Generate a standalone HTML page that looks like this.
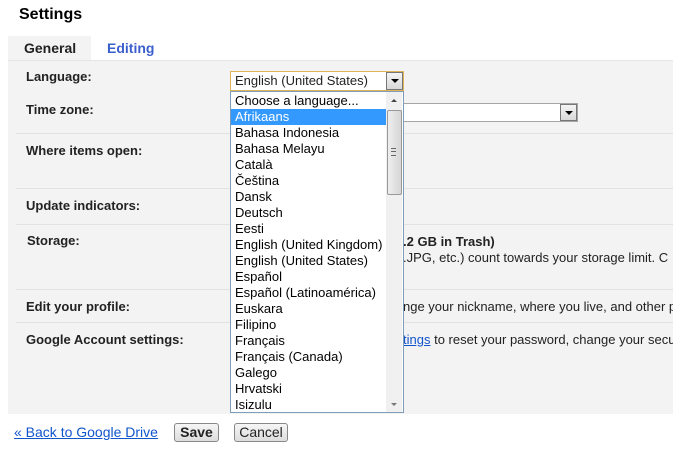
<!DOCTYPE html>
<html><head><style>
body{margin:0;width:673px;height:452px;background:#fff;font-family:"Liberation Sans",Arial,sans-serif;font-size:13px;color:#222;position:relative;overflow:hidden}
.a{position:absolute;white-space:nowrap}
.b{font-weight:bold}
.sep{position:absolute;left:16px;right:0;height:1px;background:#e2e2e2}
.btn{position:absolute;border:1px solid #888;border-radius:3px;background:linear-gradient(#f6f6f6,#ddd);font-size:14px;text-align:center;line-height:17px}
.list div{height:16px;line-height:16px;padding-left:4px}
</style></head><body>
<div class="a b" style="left:19px;top:6px;font-size:16px;color:#000">Settings</div>
<div class="a" style="left:8px;top:36px;width:83px;height:24px;background:#f3f3f3"></div>
<div class="a b" style="left:24px;top:40px;color:#222;font-size:14px">General</div>
<div class="a b" style="left:107px;top:40px;color:#3a5fcd;font-size:14px">Editing</div>
<div class="a" style="left:8px;top:60px;right:0;height:353px;background:#f3f3f3;border-top:1px solid #e5e5e5"></div>
<div class="sep" style="top:133px"></div>
<div class="sep" style="top:188px"></div>
<div class="sep" style="top:224px"></div>
<div class="sep" style="top:289px"></div>
<div class="sep" style="top:322px"></div>
<div class="a b" style="left:26px;top:69px">Language:</div>
<div class="a b" style="left:26px;top:102px">Time zone:</div>
<div class="a b" style="left:26px;top:143px">Where items open:</div>
<div class="a b" style="left:26px;top:198px">Update indicators:</div>
<div class="a b" style="left:27px;top:233px">Storage:</div>
<div class="a b" style="left:26px;top:299px">Edit your profile:</div>
<div class="a b" style="left:26px;top:332px">Google Account settings:</div>
<div class="a b" style="left:403px;top:234px">.2 GB in Trash)</div>
<div class="a" style="left:403px;top:250px">.JPG, etc.) count towards your storage limit. C</div>
<div class="a" style="left:403px;top:299px">nge your nickname, where you live, and other p</div>
<div class="a" style="left:403px;top:332px"><span style="color:#15c;text-decoration:underline">tings</span> to reset your password, change your secu</div>
<!-- time zone select -->
<div class="a" style="left:400px;top:103px;width:176px;height:17px;background:#fff;border:1px solid #a5a5a5"></div>
<div class="a" style="left:560px;top:104px;width:15px;height:15px;border:1px solid #777;background:linear-gradient(#f4f4f4,#d8d8d8)"><div style="margin:6px auto 0;width:0;height:0;border-left:4px solid transparent;border-right:4px solid transparent;border-top:4px solid #000"></div></div>
<!-- language select -->
<div class="a" style="left:230px;top:71px;width:172px;height:18px;background:#fff;border:1px solid #e0b55a"></div>
<div class="a" style="left:235px;top:73px">English (United States)</div>
<div class="a" style="left:386px;top:72px;width:15px;height:16px;border:1px solid #777;background:linear-gradient(#f4f4f4,#d8d8d8)"><div style="margin:6px auto 0;width:0;height:0;border-left:4px solid transparent;border-right:4px solid transparent;border-top:4px solid #000"></div></div>
<!-- list -->
<div class="a list" style="left:230px;top:91px;width:172px;height:320px;background:#fff;border:1px solid #7f9db9;overflow:hidden;color:#000">
<div style="width:151px;margin-top:1px">Choose a language...</div>
<div style="width:151px;background:#3399ff;color:#fff">Afrikaans</div>
<div>Bahasa Indonesia</div><div>Bahasa Melayu</div><div>Català</div><div>Čeština</div><div>Dansk</div><div>Deutsch</div><div>Eesti</div><div>English (United Kingdom)</div><div>English (United States)</div><div>Español</div><div>Español (Latinoamérica)</div><div>Euskara</div><div>Filipino</div><div>Français</div><div>Français (Canada)</div><div>Galego</div><div>Hrvatski</div><div>Isizulu</div>
</div>
<div class="a" style="left:386px;top:92px;width:16px;height:320px;background:#f0f0f0"></div>
<div class="a" style="left:391px;top:99px;width:0;height:0;border-left:3px solid transparent;border-right:3px solid transparent;border-bottom:3px solid #444"></div>
<div class="a" style="left:391px;top:403px;width:0;height:0;border-left:3px solid transparent;border-right:3px solid transparent;border-top:3px solid #777"></div>
<div class="a" style="left:387px;top:110px;width:13px;height:83px;border:1px solid #999;border-radius:2px;background:linear-gradient(90deg,#eee,#d6d6d6)"></div>
<div class="a" style="left:391px;top:148px;width:5px;height:6px;border-top:1px solid #666;border-bottom:1px solid #666"><div style="margin-top:2px;height:1px;background:#666"></div></div>
<!-- footer -->
<div class="a" style="left:14px;top:424px;color:#15c;text-decoration:underline;font-size:14px">« Back to Google Drive</div>
<div class="btn" style="left:174px;top:423px;width:43px;height:17px;font-weight:bold">Save</div>
<div class="btn" style="left:234px;top:423px;width:52px;height:17px">Cancel</div>
</body></html>
